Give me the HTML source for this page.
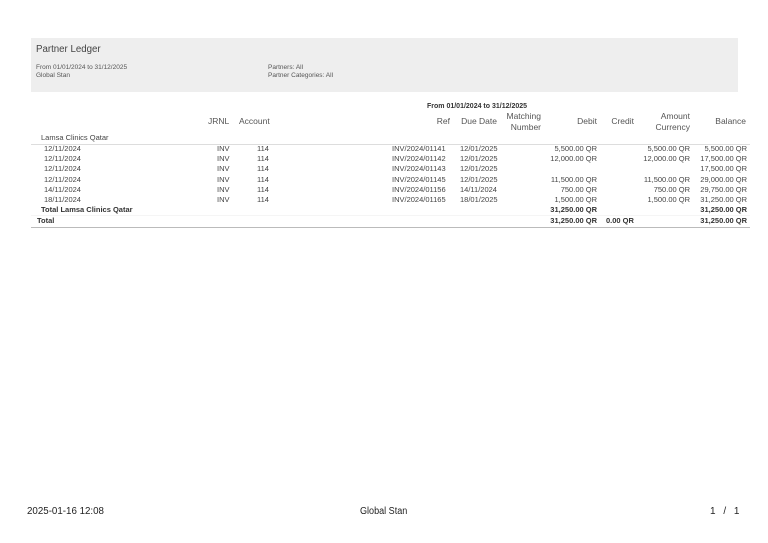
<!DOCTYPE html>
<html><head><meta charset="utf-8"><title>Partner Ledger</title>
<style>
html,body{margin:0;padding:0;background:#fff}
#p{position:relative;width:768px;height:543px;overflow:hidden;font-family:"Liberation Sans",sans-serif;color:#444;font-size:7.5px}
#p div{position:absolute;white-space:nowrap;line-height:10px}
.r{text-align:right}
.b{font-weight:bold;color:#333}
.h{font-size:8.5px;color:#555}
.m{line-height:11px!important}
.f{font-size:10px;color:#222;line-height:12px!important;transform-origin:left center}
.s{font-size:6.5px;color:#555}
.ln{height:1px;line-height:1px!important}
</style></head><body><div id="p">
<div style="left:31px;top:38px;width:707px;height:54px;background:#eee"></div>
<div style="left:36px;top:43px;font-size:9.7px;color:#444;padding-top:0;margin-top:2px">Partner Ledger</div>
<div class="s" style="left:36px;top:63px">From 01/01/2024 to 31/12/2025</div>
<div class="s" style="left:36px;top:71px">Global Stan</div>
<div class="s" style="left:268px;top:63px">Partners: All</div>
<div class="s" style="left:268px;top:71px">Partner Categories: All</div>
<div class="b" style="left:427px;top:102px;font-size:7px">From 01/01/2024 to 31/12/2025</div>

<div class="h" style="left:208px;top:116px">JRNL</div>
<div class="h" style="left:239px;top:116px">Account</div>
<div class="h" style="right:318px;top:116px">Ref</div>
<div class="h" style="right:271px;top:116px">Due Date</div>
<div class="h r m" style="right:227px;top:111px">Matching<br>Number</div>
<div class="h" style="right:171px;top:116px">Debit</div>
<div class="h" style="right:134px;top:116px">Credit</div>
<div class="h r m" style="right:78px;top:111px">Amount<br>Currency</div>
<div class="h" style="right:22px;top:116px">Balance</div>

<div style="left:41px;top:133px;font-size:7.5px">Lamsa Clinics Qatar</div>
<div class="ln" style="left:31px;top:144px;width:719px;background:#ddd"></div>

<div style="left:44px;top:144px">12/11/2024</div><div style="left:217px;top:144px">INV</div><div style="left:257px;top:144px">114</div><div style="left:392px;top:144px">INV/2024/01141</div><div style="left:460px;top:144px">12/01/2025</div><div style="right:171px;top:144px">5,500.00 QR</div><div style="right:78px;top:144px">5,500.00 QR</div><div style="right:21px;top:144px">5,500.00 QR</div>

<div style="left:44px;top:154px">12/11/2024</div><div style="left:217px;top:154px">INV</div><div style="left:257px;top:154px">114</div><div style="left:392px;top:154px">INV/2024/01142</div><div style="left:460px;top:154px">12/01/2025</div><div style="right:171px;top:154px">12,000.00 QR</div><div style="right:78px;top:154px">12,000.00 QR</div><div style="right:21px;top:154px">17,500.00 QR</div>

<div style="left:44px;top:164px">12/11/2024</div><div style="left:217px;top:164px">INV</div><div style="left:257px;top:164px">114</div><div style="left:392px;top:164px">INV/2024/01143</div><div style="left:460px;top:164px">12/01/2025</div><div style="right:21px;top:164px">17,500.00 QR</div>

<div style="left:44px;top:175px">12/11/2024</div><div style="left:217px;top:175px">INV</div><div style="left:257px;top:175px">114</div><div style="left:392px;top:175px">INV/2024/01145</div><div style="left:460px;top:175px">12/01/2025</div><div style="right:171px;top:175px">11,500.00 QR</div><div style="right:78px;top:175px">11,500.00 QR</div><div style="right:21px;top:175px">29,000.00 QR</div>

<div style="left:44px;top:185px">14/11/2024</div><div style="left:217px;top:185px">INV</div><div style="left:257px;top:185px">114</div><div style="left:392px;top:185px">INV/2024/01156</div><div style="left:460px;top:185px">14/11/2024</div><div style="right:171px;top:185px">750.00 QR</div><div style="right:78px;top:185px">750.00 QR</div><div style="right:21px;top:185px">29,750.00 QR</div>

<div style="left:44px;top:195px">18/11/2024</div><div style="left:217px;top:195px">INV</div><div style="left:257px;top:195px">114</div><div style="left:392px;top:195px">INV/2024/01165</div><div style="left:460px;top:195px">18/01/2025</div><div style="right:171px;top:195px">1,500.00 QR</div><div style="right:78px;top:195px">1,500.00 QR</div><div style="right:21px;top:195px">31,250.00 QR</div>

<div class="b" style="left:41px;top:205px">Total Lamsa Clinics Qatar</div><div class="b" style="right:171px;top:205px">31,250.00 QR</div><div class="b" style="right:21px;top:205px">31,250.00 QR</div>
<div class="ln" style="left:31px;top:215px;width:719px;background:#f5f5f5"></div>
<div class="b" style="left:37px;top:216px">Total</div><div class="b" style="right:171px;top:216px">31,250.00 QR</div><div class="b" style="left:606px;top:216px">0.00 QR</div><div class="b" style="right:21px;top:216px">31,250.00 QR</div>
<div class="ln" style="left:31px;top:227px;width:719px;background:#bbb"></div>

<div class="f" style="left:27px;top:506px;transform:scaleX(.975)">2025-01-16 12:08</div>
<div class="f" style="left:360px;top:506px;transform:scaleX(.905)">Global Stan</div>
<div class="f" style="left:710px;top:506px;word-spacing:5px">1 / 1</div>
</div></body></html>
